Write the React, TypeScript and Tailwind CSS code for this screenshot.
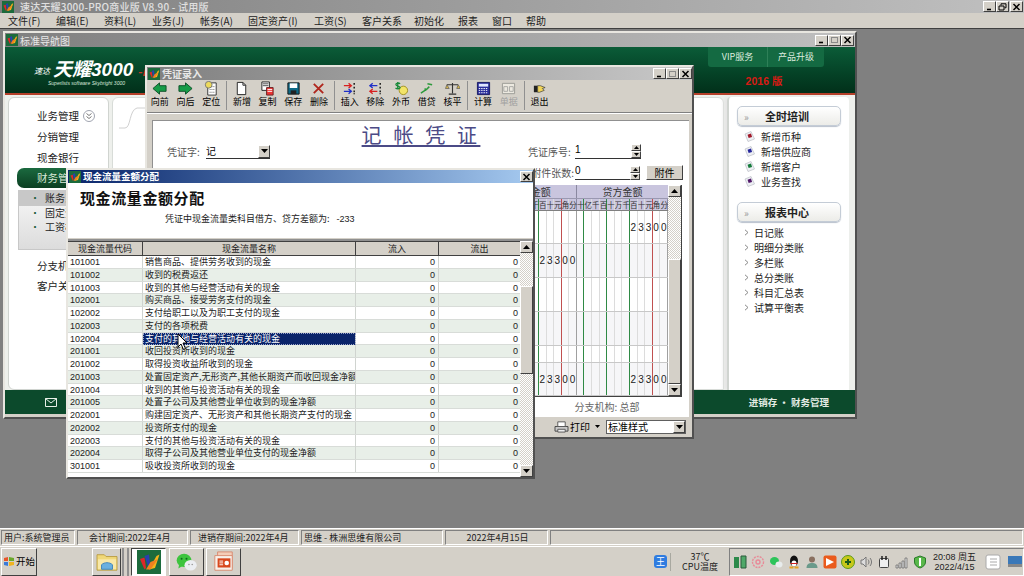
import type { ReactNode } from "react";

const raised = "border border-t-white border-l-white border-r-[#404040] border-b-[#404040]";
const windowEdge = "border-2 border-t-[#e8e6e0] border-l-[#e8e6e0] border-r-[#505050] border-b-[#505050] bg-[#d4d0c8]";
const checker = "bg-[repeating-conic-gradient(#d4d0c8_0%_25%,#ffffff_0%_50%)] bg-[length:2px_2px]";

function AppIcon({ size = 12 }: { size?: number }) {
  return (
    <svg width={size} height={size} viewBox="0 0 16 16" className="shrink-0">
      <rect width="16" height="16" fill="#1c6b3c" />
      <path d="M2 6l3 7 1-1-1-7z" fill="#e0262a" />
      <path d="M5 4l3 9 1-1-1-9z" fill="#2a3fb0" />
      <path d="M8 13l5-9 2-1-3 9z" fill="#f4b41a" />
      <path d="M6 13l3-5 5-2-5 7z" fill="#f08020" />
    </svg>
  );
}

function CaptionButton({ kind, dim }: { kind: "min" | "max" | "restore" | "close"; dim?: boolean }) {
  return (
    <div className={`w-[13px] h-[11px] bg-[#d4d0c8] flex items-center justify-center ${raised}`}>
      <svg width="9" height="8" viewBox="0 0 9 8" fill="none" stroke={dim ? "#8a8a8a" : "#000"}>
        {kind === "min" && <path d="M2 6.5h4" strokeWidth="1.6" />}
        {kind === "max" && <rect x="1.5" y="1.5" width="6" height="5" />}
        {kind === "restore" && <path d="M3 2.5V.8h5v4H6.5M1 3h5v4H1z" />}
        {kind === "close" && <path d="M1.5 1l6 6M7.5 1l-6 6" strokeWidth="1.5" />}
      </svg>
    </div>
  );
}

function Arrow({ down }: { down?: boolean }) {
  return (
    <svg width="7" height="4" viewBox="0 0 7 4">
      <path d={down ? "M0 0h7L3.5 4z" : "M0 4h7L3.5 0z"} fill="#000" />
    </svg>
  );
}

function ScrollButton({ down }: { down?: boolean }) {
  return (
    <div className={`h-[12px] shrink-0 bg-[#d4d0c8] flex items-center justify-center ${raised}`}>
      <Arrow down={down} />
    </div>
  );
}

function Spinner() {
  return (
    <div className="w-[10px] h-[14px] flex flex-col">
      <div className={`flex-1 bg-[#d4d0c8] flex items-center justify-center ${raised}`}>
        <svg width="5" height="3" viewBox="0 0 5 3"><path d="M0 3h5L2.5 0z" /></svg>
      </div>
      <div className={`flex-1 bg-[#d4d0c8] flex items-center justify-center ${raised}`}>
        <svg width="5" height="3" viewBox="0 0 5 3"><path d="M0 0h5L2.5 3z" /></svg>
      </div>
    </div>
  );
}

function ToolIcon({ name }: { name: string }) {
  const box = { width: 15, height: 15, viewBox: "0 0 16 16" };
  switch (name) {
    case "向前":
      return <svg {...box}><path d="M1 8l7-6v3h7v6H8v3z" fill="#169c48" stroke="#0c4f28" /></svg>;
    case "向后":
      return <svg {...box}><path d="M15 8L8 2v3H1v6h7v3z" fill="#169c48" stroke="#0c4f28" /></svg>;
    case "定位":
      return (
        <svg {...box}>
          <path d="M4 2h9v13H4z" fill="#fff" stroke="#333" />
          <path d="M6 6h5M6 9h5M6 12h5" stroke="#555" strokeDasharray="1 1" />
          <circle cx="5" cy="4" r="3.6" fill="#ecd95a" stroke="#777" />
        </svg>
      );
    case "新增":
      return <svg {...box}><path d="M3.5 1.5h6l3 3v10h-9z" fill="#fff" stroke="#222" /><path d="M9.5 1.5v3h3" fill="none" stroke="#222" /></svg>;
    case "复制":
      return (
        <svg {...box}>
          <path d="M2 1h8v9H2z" fill="#fff" stroke="#222" />
          <path d="M3 3h6M3 5h6" stroke="#444" />
          <path d="M7 7h7v8H7z" fill="#e33" stroke="#622" />
          <path d="M8 9h5M8 11h5" stroke="#fff" />
        </svg>
      );
    case "保存":
      return (
        <svg {...box}>
          <path d="M2 2h12v12H2z" fill="#0f6a86" stroke="#111" />
          <path d="M4 2.5h8v5H4z" fill="#fff" />
          <path d="M5 10h6v4H5z" fill="#222" />
        </svg>
      );
    case "删除":
      return <svg {...box}><path d="M3 3l10 10M13 3L3 13" stroke="#b0261c" strokeWidth="2" /></svg>;
    case "插入":
      return (
        <svg {...box}>
          <path d="M2 5h8M7 2.5L10 5 7 7.5" fill="none" stroke="#d82020" strokeWidth="1.4" />
          <path d="M2 11h8M7 8.5l3 2.5-3 2.5" fill="none" stroke="#2030c8" strokeWidth="1.4" />
          <path d="M13 2v2M13 6v2M13 10v2M13 13v1" stroke="#111" strokeWidth="1.5" />
        </svg>
      );
    case "移除":
      return (
        <svg {...box}>
          <path d="M10 5H2M5 2.5L2 5l3 2.5" fill="none" stroke="#2030c8" strokeWidth="1.4" />
          <path d="M10 11H2M5 8.5L2 11l3 2.5" fill="none" stroke="#d82020" strokeWidth="1.4" />
          <path d="M13 2v2M13 6v2M13 10v2M13 13v1" stroke="#111" strokeWidth="1.5" />
        </svg>
      );
    case "外币":
      return (
        <svg {...box}>
          <circle cx="10" cy="10" r="4.5" fill="#f2e468" stroke="#a09020" />
          <path d="M4 1v8M6.5 3C5 1.6 2 2 2 3.7S6.5 5.4 6.5 7 3 8.6 1.6 7.4" fill="none" stroke="#1a8a3a" strokeWidth="1.4" />
        </svg>
      );
    case "借贷":
      return <svg {...box}><path d="M2 13l6-4M8 9l3-3M9 3l5 1M6 8l2 2" fill="none" stroke="#2d9a3c" strokeWidth="1.6" /></svg>;
    case "核平":
      return (
        <svg {...box}>
          <path d="M8 2v11M4 14h8M2 4h12" stroke="#333" strokeWidth="1.2" />
          <path d="M2 4L0.5 8h4zM14 4l-1.5 4h4z" fill="#d7b64c" stroke="#555" strokeWidth=".7" />
        </svg>
      );
    case "计算":
      return (
        <svg {...box}>
          <path d="M1.5 1.5h13v13h-13z" fill="#2b2f9c" stroke="#1a1a60" />
          <path d="M3 3h10v3H3z" fill="#dfe6ff" />
          <path d="M3 8h10M3 10h10M3 12.5h10" stroke="#fff" strokeDasharray="1.5 1" />
        </svg>
      );
    case "单据":
      return (
        <svg {...box}>
          <path d="M1.5 2.5h13v11h-13z" fill="#ece9e0" stroke="#9a9a94" />
          <path d="M3 6h4v5H3zM9 6h4v5H9z" fill="none" stroke="#a8a8a4" />
        </svg>
      );
    default:
      return (
        <svg {...box}>
          <path d="M2 5h4v7H2z" fill="#222" />
          <path d="M6 5h3l5 2-3 1 2 2-5 2H6z" fill="#f2d65a" stroke="#333" strokeWidth=".7" />
        </svg>
      );
  }
}

const toolGroups = [
  ["向前", "向后", "定位"],
  ["新增", "复制", "保存", "删除"],
  ["插入", "移除", "外币", "借贷", "核平"],
  ["计算", "单据"],
  ["退出"],
];

function Toolbar() {
  return (
    <div className="h-[33px] shrink-0 flex items-start pt-[1px] border-b border-[#808080] shadow-[0_1px_0_#fff]">
      {toolGroups.map((group, i) => (
        <div key={i} className={`flex h-[29px] pr-[2px] ${i < toolGroups.length - 1 ? "border-r border-[#909090] mr-[2px]" : ""}`}>
          {group.map((label) => (
            <div key={label} className="w-[25.7px] flex flex-col items-center">
              <ToolIcon name={label} />
              <span className={`text-[9px] leading-[12px] whitespace-nowrap ${label === "单据" ? "text-[#a0a0a0]" : "text-black"}`}>
                {label}
              </span>
            </div>
          ))}
        </div>
      ))}
    </div>
  );
}

const digitLabels = ["十", "亿", "千", "百", "十", "万", "千", "百", "十", "元", "角", "分"];

function digitBorder(i: number) {
  if (i === 11) return "border-[#a0a0a0]";
  if (i === 9) return "border-[#c05050]";
  if (i === 0 || i === 3 || i === 6) return "border-[#2f8a45]";
  return "border-[#dcdcdc]";
}

function DigitRow({ debit, credit, h, shade }: { debit?: string; credit?: string; h: number; shade?: boolean }) {
  const cells = (value?: string) =>
    digitLabels.map((_, i) => {
      const ch = value ? value[i - (12 - value.length)] : undefined;
      return (
        <div key={i} className={`w-[7.6px] shrink-0 border-r flex items-center justify-center ${digitBorder(i)}`}>
          <span className="text-[10px] text-[#222] font-['Liberation_Sans']">{ch}</span>
        </div>
      );
    });
  return (
    <div className={`flex border-b border-[#c8c8c8] ${shade ? "bg-[#f6f6f8]" : "bg-white"}`} style={{ height: h }}>
      <div className="flex-1" />
      {cells(debit)}
      {cells(credit)}
    </div>
  );
}

function VoucherGrid() {
  return (
    <div className="flex ml-[7px] mr-[7px] mt-[1px] h-[212px] border-r border-b border-[#404040]">
      <div className="flex-1 flex flex-col min-w-0">
        <div className="flex h-[14px] bg-[#c9c5de] text-[10px] leading-[14px] text-[#333] border-b border-[#9a98b0]">
          <div className="flex-1" />
          <div className="w-[91.2px] text-center border-r border-[#8a88a0]">借方金额</div>
          <div className="w-[91.2px] text-center">贷方金额</div>
        </div>
        <div className="flex h-[12px] bg-[#c9c5de] text-[7.5px] leading-[12px] text-[#333] border-b border-[#808080]">
          <div className="flex-1" />
          {[...digitLabels, ...digitLabels].map((d, i) => (
            <div key={i} className={`w-[7.6px] text-center shrink-0 border-r ${i % 12 === 11 ? "border-[#8a88a0]" : digitBorder(i % 12)}`}>
              {d}
            </div>
          ))}
        </div>
        <DigitRow h={33} credit="23300" />
        <DigitRow h={34} debit="23300" shade />
        <DigitRow h={34} />
        <DigitRow h={34} shade />
        <DigitRow h={17} />
        <DigitRow h={33} debit="23300" credit="23300" shade />
      </div>
      <div className="w-[13px] flex flex-col">
        <ScrollButton />
        <div className={`h-[62px] ${checker}`} />
        <div className={`flex-1 bg-[#d4d0c8] ${raised}`} />
        <ScrollButton down />
      </div>
    </div>
  );
}

function VoucherWindow() {
  return (
    <div className={`absolute left-[145px] top-[36px] w-[549px] h-[374px] flex flex-col ${windowEdge}`}>
      <div className="h-[13px] shrink-0 flex items-center gap-[2px] pl-[1px] bg-gradient-to-r from-[#808080] to-[#c8c8c8]">
        <AppIcon />
        <span className="text-[10px] text-[#e8e8e8] font-bold">凭证录入</span>
        <div className="ml-auto flex"><CaptionButton kind="min" /><CaptionButton kind="max" dim /><CaptionButton kind="close" /></div>
      </div>
      <Toolbar />
      <div className="ml-[5px] w-[537px] mt-[7px] h-[297px] bg-white flex flex-col border-l border-t border-[#909090] shrink-0">
        <div className="h-[21px] flex justify-center">
          <span className="text-[20px] leading-[30px] text-[#4b4a86] underline underline-offset-2 tracking-[3.4px] whitespace-nowrap font-['Liberation_Serif','Noto_Sans_CJK_SC',serif]">
            记 帐 凭 证
          </span>
        </div>
        <div className="h-[19px] flex items-center pl-[14px] text-[10px] text-[#555]">
          <span className="w-[39px]">凭证字:</span>
          <div className="w-[64px] h-[14px] flex items-center justify-between border-b border-[#333] text-black">
            <span className="-mt-[2px]">记</span>
            <div className={`w-[12px] h-[13px] bg-[#d4d0c8] flex items-center justify-center ${raised}`}><Arrow down /></div>
          </div>
          <span className="ml-auto w-[47px]">凭证序号:</span>
          <div className="w-[66px] h-[14px] mr-[48px] flex items-center justify-between border-b border-[#333] text-black">
            <span className="-mt-[4px] font-['Liberation_Sans']">1</span><Spinner />
          </div>
        </div>
        <div className="h-[23px] flex items-end justify-end pb-[4px] pr-[6px] text-[10px] text-[#555]">
          <span className="mr-[1px]">附件张数:</span>
          <div className="w-[65px] h-[14px] flex items-center justify-between border-b border-[#333] text-black">
            <span className="-mt-[4px] font-['Liberation_Sans']">0</span><Spinner />
          </div>
          <div className={`ml-[6px] w-[37px] h-[15px] bg-[#d4d0c8] text-black text-center leading-[13px] ${raised}`}>附件</div>
        </div>
        <VoucherGrid />
        <div className="text-center text-[10px] text-[#666] mt-[2px] pl-[372px]">分支机构: 总部</div>
      </div>
      <div className="flex items-center justify-end gap-[1px] pt-[2px] pr-[6px] text-[10px] text-black">
        <svg width="15" height="13" viewBox="0 0 16 14">
          <path d="M1 7h14v5H1z" fill="#c8c8c8" stroke="#444" />
          <path d="M4 2h8v5H4z" fill="#fff" stroke="#555" />
          <path d="M4 10h8v3H4z" fill="#eee" stroke="#555" />
        </svg>
        <span className="text-[10px] mr-[4px]">打印</span>
        <svg width="5" height="3" viewBox="0 0 5 3" className="mr-[5px]"><path d="M0 0h5L2.5 3z" /></svg>
        <div className="w-[80px] h-[14px] bg-white border border-[#606060] flex items-center justify-between pl-[1px]">
          标准样式
          <div className={`w-[12px] h-[12px] bg-[#d4d0c8] flex items-center justify-center ${raised}`}><Arrow down /></div>
        </div>
      </div>
    </div>
  );
}

const cashRows = [
  ["101001", "销售商品、提供劳务收到的现金"],
  ["101002", "收到的税费返还"],
  ["101003", "收到的其他与经营活动有关的现金"],
  ["102001", "购买商品、接受劳务支付的现金"],
  ["102002", "支付给职工以及为职工支付的现金"],
  ["102003", "支付的各项税费"],
  ["102004", "支付的其他与经营活动有关的现金"],
  ["201001", "收回投资所收到的现金"],
  ["201002", "取得投资收益所收到的现金"],
  ["201003", "处置固定资产,无形资产,其他长期资产而收回现金净额"],
  ["201004", "收到的其他与投资活动有关的现金"],
  ["201005", "处置子公司及其他营业单位收到的现金净额"],
  ["202001", "购建固定资产、无形资产和其他长期资产支付的现金"],
  ["202002", "投资所支付的现金"],
  ["202003", "支付的其他与投资活动有关的现金"],
  ["202004", "取得子公司及其他营业单位支付的现金净额"],
  ["301001", "吸收投资所收到的现金"],
];

const headCell = `h-[14px] bg-[#d4d0c8] text-center text-[9px] leading-[13px] text-[#222] border-r border-b border-[#404040]`;

function CashDialog() {
  return (
    <div className={`absolute left-[66px] top-[139px] w-[469px] h-[311px] flex flex-col ${windowEdge}`}>
      <div className="h-[13px] shrink-0 flex items-center gap-[2px] pl-[1px] bg-gradient-to-r from-[#0a246a] to-[#a6caf0]">
        <AppIcon />
        <span className="text-[9.5px] text-white font-bold">现金流量金额分配</span>
        <div className="ml-auto"><CaptionButton kind="close" /></div>
      </div>
      <div className="h-[55px] shrink-0 bg-white pl-[12px] pt-[6px]">
        <div className="text-[15px] leading-[20px] font-bold text-[#111] tracking-[0.6px] font-['Liberation_Serif','Noto_Sans_CJK_SC',serif]">现金流量金额分配</div>
        <div className="text-[9px] leading-[12px] text-[#222] mt-[4px] pl-[85px] whitespace-nowrap">
          凭证中现金流量类科目借方、贷方差额为:<span className="ml-[7px] font-['Liberation_Sans']">-233</span>
        </div>
      </div>
      <div className="flex-1 flex border-t-2 border-[#909090] min-h-0 mt-[1px]">
        <div className="flex-1 flex flex-col bg-white overflow-hidden">
          <div className="grid grid-cols-[75px_213px_83px_82px] border-t border-[#404040]">
            <div className={headCell}>现金流量代码</div>
            <div className={headCell}>现金流量名称</div>
            <div className={headCell}>流入</div>
            <div className={headCell}>流出</div>
          </div>
          {cashRows.map(([code, name], i) => (
            <div
              key={code}
              className={`grid grid-cols-[75px_213px_83px_82px] h-[12.75px] shrink-0 text-[9px] leading-[12px] text-[#222] border-b border-[#d8dcd8] ${i % 2 ? "bg-[#e8efe8]" : "bg-white"}`}
            >
              <div className="pl-[2px] border-r border-[#d0d4d0] font-['Liberation_Sans']">{code}</div>
              <div
                className={`pl-[2px] border-r border-[#d0d4d0] whitespace-nowrap overflow-hidden ${code === "102004" ? "bg-[#0a246a] text-white outline-1 outline-dotted outline-[#9aa4c8] -outline-offset-1" : ""}`}
              >
                {name}
              </div>
              <div className="text-right pr-[3px] border-r border-[#d0d4d0] font-['Liberation_Sans']">0</div>
              <div className="text-right pr-[3px] font-['Liberation_Sans']">0</div>
            </div>
          ))}
        </div>
        <div className="w-[13px] flex flex-col">
          <ScrollButton />
          <div className={`h-[33px] ${checker}`} />
          <div className={`h-[88px] bg-[#d4d0c8] ${raised}`} />
          <div className={`flex-1 ${checker}`} />
          <ScrollButton down />
        </div>
      </div>
      <svg width="13" height="18" viewBox="0 0 13 18" className="absolute left-[109px] top-[163px]">
        <path d="M1 1v13l3-3 2.500 5.500 2-1L6 10h4z" fill="#fff" stroke="#000" />
      </svg>
    </div>
  );
}

function Book({ color }: { color: string }) {
  return (
    <svg width="11" height="11" viewBox="0 0 11 11" className="shrink-0">
      <path d="M1 3l6-2.5L10.5 8 4 10.5z" fill="#eef0f4" stroke="#b0b4bc" strokeWidth=".6" />
      <rect x="4" y="3" width="3.6" height="3.6" fill={color} transform="rotate(-18 5.8 4.8)" />
    </svg>
  );
}

function SideButton({ label }: { label: string }) {
  return (
    <div className="mx-[8px] h-[20px] rounded-[5px] border border-[#c4ccd6] bg-gradient-to-b from-white to-[#ecece8] shadow-[0_1px_1px_#b8c0cc] flex items-center text-[11px] font-bold text-[#222]">
      <span className="w-[27px] pl-[6px] text-[10px] font-normal text-[#999]">»</span>
      {label}
    </div>
  );
}

function SubItem({ label, active }: { label: string; active?: boolean }) {
  return (
    <div className={`h-[14.5px] pl-[11px] leading-[14px] whitespace-nowrap overflow-hidden ${active ? "bg-[#c8c8c8]" : ""}`}>
      <span className="mr-[5px] text-[#1b5a3a]">•</span>
      {label}
    </div>
  );
}

function NavWindow() {
  return (
    <div className={`absolute left-[3px] top-[2px] w-[854px] h-[388px] pb-[3px] flex flex-col ${windowEdge}`}>
      <div className="h-[14px] shrink-0 flex items-center gap-[2px] pl-[1px] pr-[1px] bg-gradient-to-r from-[#808080] to-[#c0c0c0]">
        <AppIcon />
        <span className="text-[10px] text-[#e8e8e8]">标准导航图</span>
        <div className="ml-auto flex"><CaptionButton kind="min" /><CaptionButton kind="max" dim /><CaptionButton kind="close" /></div>
      </div>
      <div className="h-[48px] shrink-0 relative flex justify-end pr-[31px] bg-gradient-to-b from-[#0b5c38] to-[#02301a] border-b-2 border-[#b5402a]">
        <div className="pl-[29px] pt-[12px] mr-auto">
          <div className="flex items-end gap-[3px] text-white">
            <span className="text-[8px] italic mb-[3px]">速达</span>
            <span className="text-[19px] leading-[21px] italic font-bold font-['Liberation_Sans','Noto_Sans_CJK_SC',sans-serif]">天耀3000</span>
            <span className="text-[12px] leading-[19px] italic font-bold text-[#c83a28] ml-[1px]">-PRO</span>
          </div>
          <div className="text-[5px] leading-[6px] text-[#d8e8dc] italic pl-[14px] font-['Liberation_Sans']">Superlists software Skybright 3000</div>
        </div>
        <div className="flex flex-col items-center">
          <div className="flex h-[20px] bg-[#146a42] rounded-b-[3px] text-[9px] text-[#dcecdf] leading-[20px]">
            <div className="w-[60px] text-center border-r border-[#2e8058]">VIP服务</div>
            <div className="w-[56px] text-center">产品升级</div>
          </div>
          <div className="mt-[7px] text-[10.5px] font-bold text-[#d81a14] font-['Liberation_Sans','Noto_Sans_CJK_SC',sans-serif] pr-[4px]">2016 版</div>
        </div>
      </div>
      <div className="flex-1 flex gap-[3px] bg-[#eef0ec] px-[3px] pt-[2px] min-h-0">
        <div className="w-[101px] bg-white rounded-t-[6px] rounded-bl-[6px] border border-[#d0d4d0] pt-[7px] flex flex-col text-[10.5px] text-[#222]">
          <div className="pl-[28px] h-[21px] flex items-center gap-[4px]">
            业务管理
            <svg width="12" height="12" viewBox="0 0 12 12" fill="none" stroke="#777">
              <circle cx="6" cy="6" r="5.500" stroke="#a0a4b0" />
              <path d="M3.500 3.500L6 5.500l2.500-2M3.500 6.500L6 8.500l2.500-2" />
            </svg>
          </div>
          <div className="pl-[28px] h-[21px] flex items-center">分销管理</div>
          <div className="pl-[28px] h-[21px] flex items-center">现金银行</div>
          <div className="ml-[8px] h-[20px] w-[90px] rounded-l-[7px] bg-gradient-to-b from-[#1b6a3f] to-[#0b3f22] text-[#d8e8d8] pl-[20px] leading-[20px]">财务管理</div>
          <div className="ml-[9px] mt-[2px] h-[60px] bg-gradient-to-b from-[#f8f8f8] to-[#dcdcdc] border border-[#c8c8c8] text-[10px] text-[#222]">
            <SubItem label="账务系统" active />
            <SubItem label="固定资产" />
            <SubItem label="工资核算" />
          </div>
          <div className="pl-[28px] h-[20px] mt-[6px] flex items-center">分支机构</div>
          <div className="pl-[28px] h-[20px] flex items-center">客户关系</div>
        </div>
        <div className="flex-1 bg-white rounded-t-[6px] border border-[#d8dcd8] pl-[6px] pt-[8px]">
          <svg width="34" height="24" viewBox="0 0 34 24" fill="none" stroke="#d0d0d0">
            <path d="M0 22h6c6 0 4-18 12-20h16" />
          </svg>
        </div>
        <div className="w-[122px] bg-white rounded-t-[4px] border-l-2 border-[#d0d4d0] pt-[9px] mr-[3px] text-[10px] text-[#222] shadow-[-3px_0_4px_#e4e4e4]">
          <SideButton label="全时培训" />
          <div className="mt-[3px] pl-[15px]">
            {[
              ["新增币种", "#a01828"],
              ["新增供应商", "#24249a"],
              ["新增客户", "#147a3a"],
              ["业务查找", "#501868"],
            ].map(([label, color]) => (
              <div key={label} className="h-[15px] flex items-center gap-[6px]">
                <Book color={color} />
                {label}
              </div>
            ))}
          </div>
          <div className="h-[13px]" />
          <SideButton label="报表中心" />
          <div className="mt-[3px] pl-[15px]">
            {["日记账", "明细分类账", "多栏账", "总分类账", "科目汇总表", "试算平衡表"].map((label) => (
              <div key={label} className="h-[15px] flex items-center gap-[5px]">
                <svg width="5" height="7" viewBox="0 0 5 7" fill="none" stroke="#888"><path d="M1 .8L4 3.5 1 6.2" /></svg>
                {label}
              </div>
            ))}
          </div>
        </div>
      </div>
      <div className="h-[24px] shrink-0 bg-[#0c4a2c] flex items-center pl-[40px] pr-[26px]">
        <svg width="12" height="9" viewBox="0 0 12 9" fill="none" stroke="#e8f0e8">
          <path d="M.5.5h11v8H.5zM.5.5L6 5l5.500-4.500" />
        </svg>
        <span className="ml-auto text-[9.5px] font-bold text-[#e4ece4]">进销存 · 财务管理</span>
      </div>
    </div>
  );
}

const menus: [string, string][] = [
  ["文件(F)", "w-[48px]"],
  ["编辑(E)", "w-[48px]"],
  ["资料(L)", "w-[48px]"],
  ["业务(J)", "w-[48px]"],
  ["帐务(A)", "w-[48px]"],
  ["固定资产(I)", "w-[66px]"],
  ["工资(S)", "w-[48px]"],
  ["客户关系", "w-[52px]"],
  ["初始化", "w-[44px]"],
  ["报表", "w-[34px]"],
  ["窗口", "w-[34px]"],
  ["帮助", "w-[34px]"],
];

const statusCells: [string, string][] = [
  ["w-[74px]", "用户:系统管理员"],
  ["w-[111px] pl-[11px]", "会计期间:2022年4月"],
  ["w-[109px] pl-[7px]", "进销存期间:2022年4月"],
  ["w-[142px]", "思维 - 株洲思维有限公司"],
  ["w-[103px] text-center", "2022年4月15日"],
  ["flex-1", ""],
];

function TaskButton({ children, pressed, narrow }: { children: ReactNode; pressed?: boolean; narrow?: boolean }) {
  return (
    <div className={`${narrow ? "w-[29px]" : "w-[35px]"} h-[28px] flex items-center justify-center ${pressed ? "bg-white border border-t-[#404040] border-l-[#404040] border-r-white border-b-white" : `bg-[#d4d0c8] ${raised}`}`}>
      {children}
    </div>
  );
}

function TrayIcons() {
  return (
    <div className="flex items-center gap-[4px]">
      <svg width="14" height="14" viewBox="0 0 14 14"><path d="M1 2h5v11H1z" fill="#2d8a4a" /><path d="M8 1h5v12H8z" fill="#4fa868" stroke="#2a5a3a" /></svg>
      <svg width="14" height="14" viewBox="0 0 14 14" fill="none" stroke="#e88a98" strokeWidth="1.4"><circle cx="7" cy="7" r="5.5" strokeDasharray="2 1" /><circle cx="7" cy="7" r="2" /></svg>
      <svg width="14" height="14" viewBox="0 0 14 14"><ellipse cx="5.5" cy="6" rx="4.5" ry="4" fill="#2dc45a" /><ellipse cx="10" cy="9.5" rx="3.5" ry="3" fill="#e8ecec" /></svg>
      <svg width="14" height="14" viewBox="0 0 14 14"><ellipse cx="7" cy="6" rx="4" ry="5.5" fill="#111" /><ellipse cx="7" cy="8.5" rx="2.5" ry="3" fill="#fff" /><path d="M2.5 12.5h4M7.5 12.5h4" stroke="#e8a020" strokeWidth="2" /><path d="M3.5 8.5h7" stroke="#d02020" /></svg>
      <svg width="14" height="14" viewBox="0 0 14 14"><circle cx="7" cy="4.5" r="3" fill="#8a7060" /><path d="M1.5 13c0-4 2.500-5 5.500-5s5.500 1 5.500 5z" fill="#6a9a8a" /></svg>
      <svg width="14" height="14" viewBox="0 0 14 14"><rect x=".5" y=".5" width="13" height="13" rx="2" fill="#ea5a1c" /><path d="M3 3l8 4-8 4z" fill="#fff" /></svg>
      <svg width="14" height="14" viewBox="0 0 14 14"><circle cx="7" cy="7" r="6.500" fill="#c8c81a" stroke="#5a9a1a" /><path d="M7 4v6M4 7h6" stroke="#1a5a1a" strokeWidth="2" /></svg>
      <svg width="14" height="14" viewBox="0 0 14 14" fill="none" stroke="#777"><path d="M2 5h2l3-3v10L4 9H2z" fill="#ddd" /><path d="M9 4.500c1.300 1.500 1.300 3.500 0 5M11 3c2 2.500 2 5.500 0 8" /></svg>
      <svg width="14" height="14" viewBox="0 0 14 14"><rect x="2.500" y="3.500" width="9" height="9" rx="1" fill="#eee" stroke="#444" /><path d="M5 1v4M9 1v4" stroke="#222" strokeWidth="1.500" /></svg>
      <svg width="14" height="14" viewBox="0 0 14 14" fill="#ddd" stroke="#666" strokeWidth=".7"><path d="M1 10h2v3H1zM4 8h2v5H4zM7 6h2v7H7zM10 3h2v10h-2z" /></svg>
      <svg width="14" height="14" viewBox="0 0 14 14"><path d="M7 1l5.500 2v4c0 3-2.500 5-5.500 6-3-1-5.500-3-5.500-6V3z" fill="#5ab84a" stroke="#2a7a2a" /><path d="M7 3v8" stroke="#fff" strokeWidth="2" /></svg>
    </div>
  );
}

export default function App() {
  return (
    <div className="w-[1024px] h-[576px] overflow-hidden flex flex-col bg-[#d4d0c8] font-['Noto_Sans_CJK_SC','Liberation_Sans',sans-serif]">
      <div className="h-[13px] shrink-0 flex items-center pl-[2px] pr-[1px] bg-gradient-to-r from-[#808080] to-[#c0c0c0]">
        <AppIcon />
        <span className="ml-[6px] text-[10px] leading-[13px] text-[#e0e0e0] font-medium tracking-[0.2px]">速达天耀3000-PRO商业版 V8.90 - 试用版</span>
        <div className="ml-auto flex">
          <CaptionButton kind="min" />
          <CaptionButton kind="restore" />
          <div className="w-[1px]" />
          <CaptionButton kind="close" />
        </div>
      </div>
      <div className="h-[15px] shrink-0 flex items-center text-[10px] text-[#222] pl-[8px]">
        {menus.map(([m, w]) => (
          <span key={m} className={`whitespace-nowrap ${w}`}>{m}</span>
        ))}
      </div>
      <div className="relative flex-1 bg-[#808080] border-t border-[#404040]">
        <NavWindow />
        <VoucherWindow />
        <CashDialog />
      </div>
      <div className="h-[18px] shrink-0 flex gap-[2px] items-center px-[1px] border-t border-white text-[9px] text-[#222]">
        {statusCells.map(([w, text], i) => (
          <div key={i} className={`h-[15px] leading-[14px] pl-[2px] whitespace-nowrap border border-t-[#808080] border-l-[#808080] border-r-white border-b-white ${w}`}>{text}</div>
        ))}
      </div>
      <div className="h-[30px] shrink-0 flex items-center border-t border-white pl-[1px]">
        <div className={`w-[36px] h-[28px] flex items-center justify-center gap-[1px] text-[9.5px] text-black ${raised}`}>
          <svg width="12" height="12" viewBox="0 0 12 12">
            <path d="M1 2l4-1v4H1z" fill="#e8552a" /><path d="M6 1l5 1v3H6z" fill="#6aa82a" />
            <path d="M1 6h4v4l-4-1z" fill="#3a7ad8" /><path d="M6 6h5v3l-5 1z" fill="#f0b420" />
          </svg>
          开始
        </div>
        <div className="ml-[55px] flex items-center">
          <TaskButton narrow>
            <svg width="24" height="20" viewBox="0 0 26 22">
              <path d="M2 3h8l2 2h12v15H2z" fill="#f0d878" stroke="#b89a40" />
              <path d="M3 8h20v11H3z" fill="#f8e8a8" />
              <path d="M7 14c3-3 9-3 12 0v5H7z" fill="#6ab0e0" stroke="#3a80b8" />
            </svg>
          </TaskButton>
          <div className="w-[7px] h-[28px] border-x-2 border-[#909090] ml-px" />
          <div className="w-[2px]" />
          <TaskButton pressed><AppIcon size={24} /></TaskButton>
          <div className="w-[3px]" />
          <TaskButton>
            <svg width="25" height="18" viewBox="0 0 26 22">
              <ellipse cx="10" cy="9" rx="9" ry="8" fill="#3ec43e" />
              <path d="M4 14l-1 5 5-3z" fill="#3ec43e" />
              <ellipse cx="18" cy="15" rx="7.500" ry="6.500" fill="#eceef2" />
              <circle cx="7" cy="7" r="1.200" fill="#0c6a1c" /><circle cx="13" cy="7" r="1.200" fill="#0c6a1c" />
              <circle cx="16" cy="14" r="1" fill="#999" /><circle cx="20" cy="14" r="1" fill="#999" />
            </svg>
          </TaskButton>
          <div className="w-[2px]" />
          <TaskButton>
            <svg width="24" height="22" viewBox="0 0 26 24">
              <path d="M6 1h16v18H6z" fill="#f4cdb8" stroke="#d88a70" />
              <path d="M3 5h19v16H3z" fill="#f8f0ea" stroke="#d88a70" />
              <path d="M6 8h14v10H6z" fill="#d8481e" />
              <path d="M8 11h4M8 13h4M8 15h4" stroke="#fff" />
              <circle cx="16" cy="13" r="2.500" fill="#fff" />
            </svg>
          </TaskButton>
        </div>
        <div className="ml-auto flex items-center h-[28px]">
          <div className="w-[13px] h-[13px] rounded-[3px] bg-[#2f7ce0] text-white text-[9px] leading-[13px] text-center">王</div>
          <div className="w-px h-[18px] bg-[#a8a8a0] ml-[3px]" />
          <div className="w-[58px] flex flex-col items-center text-[9px] leading-[10px] text-[#222]">
            <span>37℃</span>
            <span>CPU温度</span>
          </div>
          <div className="w-[295px] h-[28px] flex items-center pl-[3px] border border-t-[#808080] border-l-[#808080] border-r-white border-b-white">
            <TrayIcons />
            <div className="ml-[6px] text-[9px] leading-[10px] text-center text-[#222] whitespace-nowrap font-['Liberation_Sans','Noto_Sans_CJK_SC',sans-serif]">20:08 周五<br />2022/4/15</div>
            <svg width="16" height="16" viewBox="0 0 16 16" className="ml-[9px]" fill="#fff" stroke="#aaa"><rect x="1" y="1" width="14" height="14" rx="2" /><path d="M5 5h7M5 8h7M5 11h7" /></svg>
            <svg width="14" height="12" viewBox="0 0 14 12" className="ml-auto mr-[1px]"><rect width="14" height="10" fill="#3a78b8" /><rect y="8" width="14" height="3" fill="#888" /></svg>
          </div>
        </div>
      </div>
    </div>
  );
}
